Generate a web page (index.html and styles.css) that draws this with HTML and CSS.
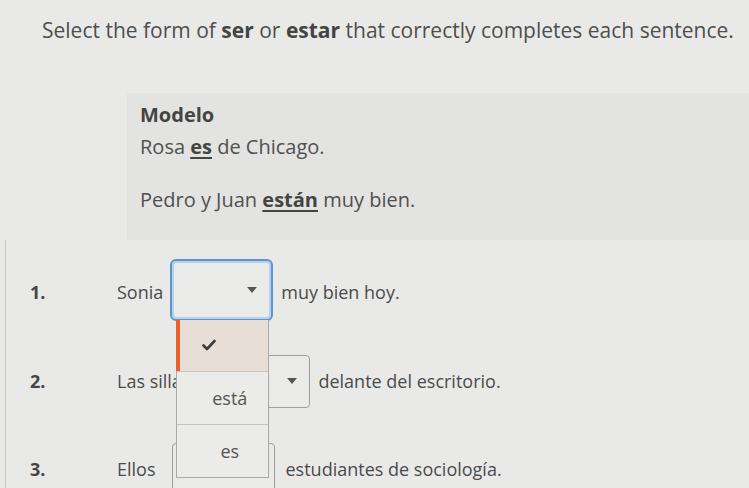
FILE: index.html
```html
<!DOCTYPE html>
<html lang="es">
<head>
<meta charset="utf-8">
<title>ser o estar</title>
<link rel="stylesheet" href="styles.css">
</head>
<body>
<div class="page">
  <h1 class="instructions">Select the form of <b>ser</b> or <b>estar</b> that correctly completes each sentence.</h1>
  <div class="modelo">
    <div class="modelo-title">Modelo</div>
    <p class="modelo-line">Rosa <u class="answer">es</u> de Chicago.</p>
    <p class="modelo-line second">Pedro y Juan <u class="answer">están</u> muy bien.</p>
  </div>
  <div class="items">
    <div class="item row1">
      <span class="num">1.</span>
      <span class="subj">Sonia</span>
      <span class="select-wrap">
        <span class="select focused"><span class="arrow"></span></span>
        <ul class="dropdown">
          <li class="opt selected"><svg class="check" viewBox="0 0 14 12" width="14" height="12"><path d="M1.5 6.5 L5 10 L12.5 2" fill="none" stroke="#3d3d3d" stroke-width="2.6" stroke-linecap="round" stroke-linejoin="round"/></svg></li>
          <li class="opt">está</li>
          <li class="opt">es</li>
        </ul>
      </span>
      <span class="rest">muy bien hoy.</span>
    </div>
    <div class="item row2">
      <span class="num">2.</span>
      <span class="subj">Las sillas</span>
      <span class="select"><span class="arrow"></span></span>
      <span class="rest">delante del escritorio.</span>
    </div>
    <div class="item row3">
      <span class="num">3.</span>
      <span class="subj">Ellos</span>
      <span class="select"><span class="arrow"></span></span>
      <span class="rest">estudiantes de sociología.</span>
    </div>
  </div>
</div>
</body>
</html>
```
FILE: styles.css
```css
* { box-sizing: border-box; }
html, body { margin: 0; padding: 0; }
body {
  background: #e9eae8;
  font-family: "Open Sans", "Noto Sans", sans-serif;
  color: #505050;
  width: 749px;
  height: 488px;
  overflow: hidden;
}
.page {
  position: relative;
  height: 488px;
}
.instructions {
  margin: 0;
  padding: 15px 0 0 42px;
  font-size: 21px;
  font-weight: 400;
  line-height: 30px;
  color: #4e4e4e;
  white-space: nowrap;
}
.instructions b { font-weight: 700; color: #444; }
.modelo {
  margin: 48px 0 0 127px;
  height: 147px;
  background: #e3e4e1;
  padding: 8px 0 0 13px;
  font-size: 20px;
  line-height: 28px;
}
.modelo-title { font-weight: 700; color: #444; }
.modelo-line { margin: 4px 0 0; }
.modelo-line.second { margin-top: 25px; }
.answer { font-weight: 700; text-decoration-thickness: 2px; text-underline-offset: 3px; color: #444; }
.items {
  border-left: 1px solid #c8c9c6;
  margin-left: 5px;
  padding-top: 19px;
  height: 260px;
}
.item {
  display: flex;
  align-items: center;
  font-size: 18px;
  color: #4a4a4a;
}
.num {
  width: 111px;
  padding-left: 24px;
  font-weight: 700;
  color: #454545;
}
.subj { margin-right: 7px; }
.row1 { height: 66px; }
.row2 { height: 58px; margin-top: 27px; }
.row3 { height: 58px; margin-top: 30px; }
.row2 .subj { margin-right: 17px; }
.row3 .subj { margin-right: 16px; }
.row3 .rest { margin-left: 11px; }
.select-wrap { position: relative; display: inline-block; }
.select {
  position: relative;
  display: inline-block;
  flex: 0 0 auto;
  width: 103px;
  height: 53px;
  border: 1px solid #9e9f9c;
  border-radius: 4px;
  background: #eaebe9;
}
.select.focused {
  width: 103px;
  height: 62px;
  border: 2px solid #5f93c9;
  border-radius: 6px;
  box-shadow: inset 0 0 0 2px #b9d2ec;
}
.arrow {
  position: absolute;
  right: 12px;
  top: 50%;
  margin-top: -3px;
  width: 0;
  height: 0;
  border-left: 5px solid transparent;
  border-right: 5px solid transparent;
  border-top: 6px solid #555;
}
.row1 .arrow { right: 14px; }
.rest { margin-left: 8px; }
.dropdown {
  position: absolute;
  left: 6px;
  top: 61px;
  width: 93px;
  margin: 0;
  padding: 0;
  list-style: none;
  background: #ebebe9;
  border: 1px solid #a9aaa7;
  border-top: none;
  z-index: 5;
}
.opt {
  height: 53px;
  display: flex;
  align-items: center;
  justify-content: center;
  padding-left: 14px;
  border-top: 1px solid #c3c4c1;
  font-size: 18px;
  color: #555;
}
.opt.selected {
  border-top: none;
  justify-content: flex-start;
  padding-left: 22px;
  background: #e6ded7;
  border-left: 4px solid #e9602b;
  margin-left: -1px;
  height: 51px;
}
.check { display: block; }
```
